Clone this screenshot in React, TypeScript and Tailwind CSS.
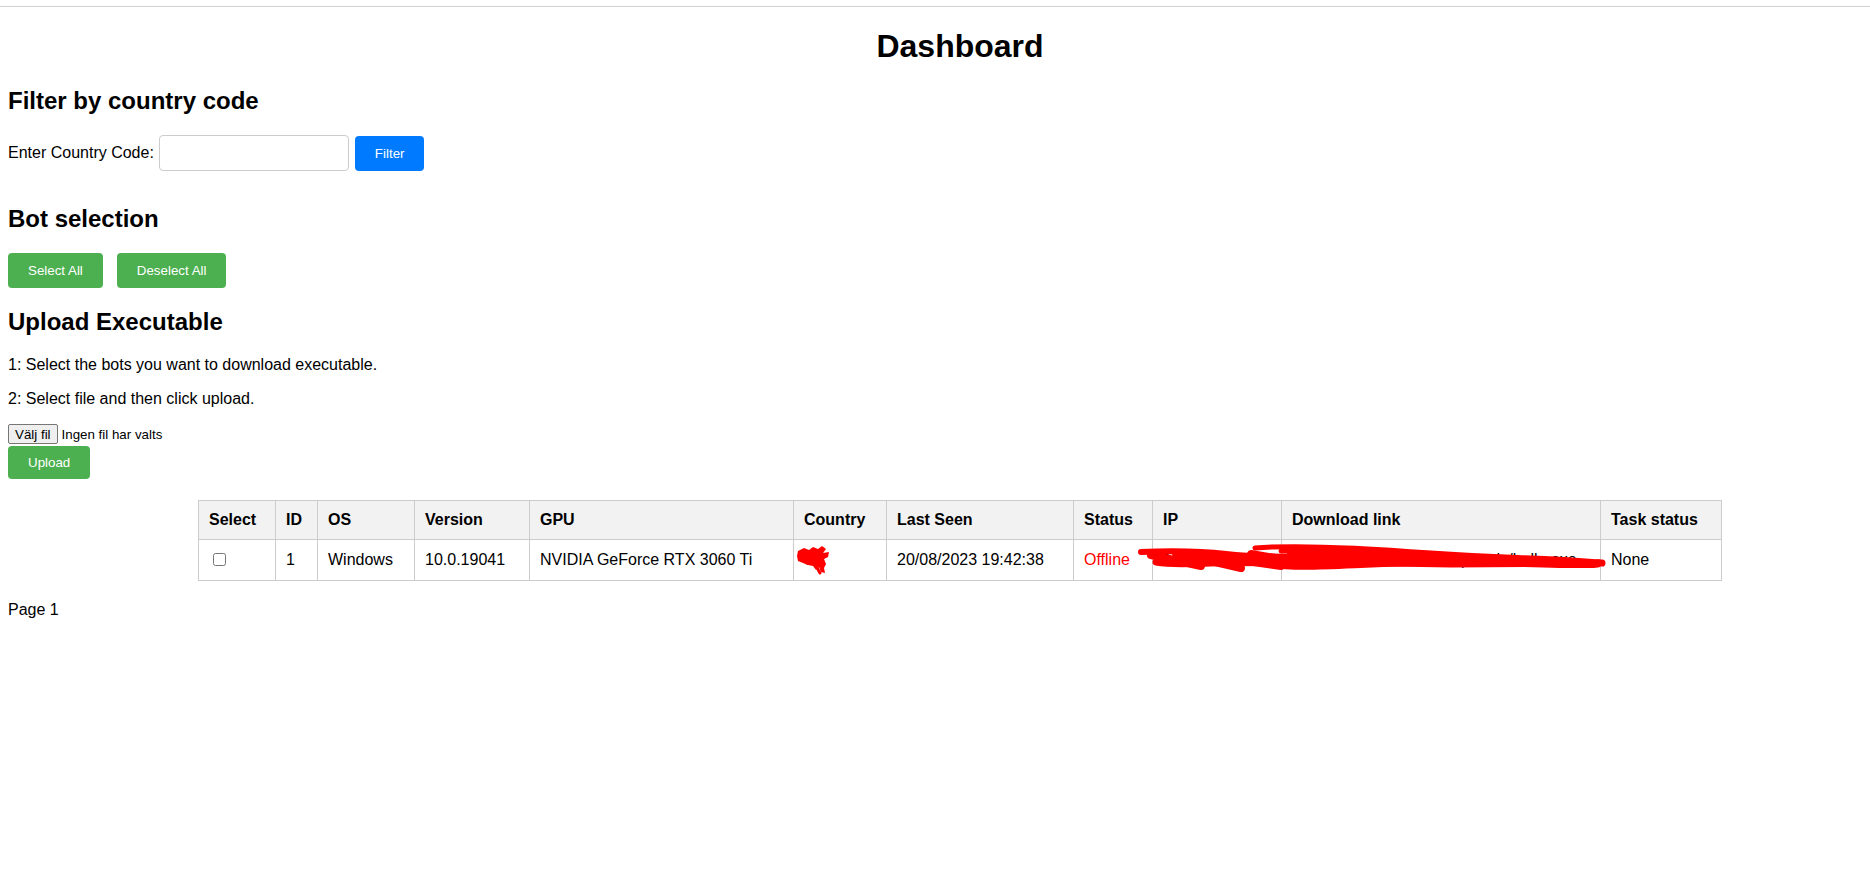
import { useState } from 'react';

const columns = [
  { name: 'Select', width: 'w-[77px]' },
  { name: 'ID', width: 'w-[42px]' },
  { name: 'OS', width: 'w-[97px]' },
  { name: 'Version', width: 'w-[115px]' },
  { name: 'GPU', width: 'w-[264px]' },
  { name: 'Country', width: 'w-[93px]' },
  { name: 'Last Seen', width: 'w-[187px]' },
  { name: 'Status', width: 'w-[79px]' },
  { name: 'IP', width: 'w-[129px]' },
  { name: 'Download link', width: 'w-[319px]' },
  { name: 'Task status', width: 'w-[121px]' },
];

// red marker scribbles that hide the country / ip / link
function CountryScribble() {
  return (
    <svg className="absolute left-[-3px] top-[4px]" width="45" height="32" viewBox="0 0 45 32">
      <path
        d="M7 7 L13 4 L18 6 L22 3 L27 5 L31 2 L35 5 L32 9 L38 8 L37 13 L33 15 L35 20 L33 24 L34 29 L30 28 L28 23 L25 26 L22 22 L17 21 L12 19 L7 17 L6 12 Z"
        fill="#ff0000"
      />
      <path d="M24 20 L29 29" stroke="#ff0000" strokeWidth="3" strokeLinecap="round" />
    </svg>
  );
}

function LinkScribble() {
  return (
    <svg className="absolute left-[-22px] top-[1px]" width="480" height="40" viewBox="0 0 480 40">
      <g fill="none" stroke="#ff0000" strokeLinecap="round" strokeLinejoin="round">
        <path d="M10 11 Q 60 9 95 13 T 200 15 T 330 18 T 471 22" strokeWidth="6" />
        <path d="M25 21 C 60 27, 100 16, 140 23 S 250 18, 380 22 S 450 21, 471 22" strokeWidth="7" />
        <path d="M124 7 C 160 4, 220 6, 300 12 S 400 15, 468 21" strokeWidth="5" />
        <path d="M20 14 L70 25 L45 12 L110 27 L80 15 L150 25 L120 13 L180 23 L160 12 L230 19" strokeWidth="8" />
        <path d="M60 23 L200 22 L320 24 L440 23" strokeWidth="5" />
        <path d="M150 10 C 200 9, 260 11, 300 16 S 360 18, 420 20" strokeWidth="5" />
        <path d="M70 18 L250 17 L350 19" strokeWidth="8" />
        <path d="M240 14 C 280 13, 330 15, 400 18" strokeWidth="4" />
      </g>
    </svg>
  );
}

export default function App() {
  const [code, setCode] = useState('');
  const [checked, setChecked] = useState(false);

  return (
    <div className="w-full overflow-hidden bg-white font-['Liberation_Sans',Arial,sans-serif] text-[16px] leading-[normal] text-black">
      <div className="w-[1920px]">
        <div className="h-[7px] border-b border-[#d0d0d0]" />

        <div className="px-2">
          <h1 className="my-[21.44px] text-center text-[32px] font-bold">Dashboard</h1>

          {/* Filter */}
          <h2 className="my-[19.92px] text-[24px] font-bold">Filter by country code</h2>
          <div className="mb-[34px] flex items-baseline">
            <label htmlFor="country">Enter Country Code:</label>
            <input
              id="country"
              type="text"
              value={code}
              onChange={(e) => setCode(e.target.value)}
              className="ml-[5px] h-[36px] w-[190px] rounded-[4px] border border-[#cccccc] px-2 text-[16px] outline-none"
            />
            <button className="ml-[6px] h-[35px] rounded-[4px] bg-[#007bff] px-5 text-[13.33px] text-white">
              Filter
            </button>
          </div>

          {/* Bot selection */}
          <h2 className="my-[19.92px] text-[24px] font-bold">Bot selection</h2>
          <div className="flex gap-[14px]">
            <button
              onClick={() => setChecked(true)}
              className="rounded-[4px] bg-[#4caf50] px-5 py-[10px] text-[13.33px] text-white"
            >
              Select All
            </button>
            <button
              onClick={() => setChecked(false)}
              className="rounded-[4px] bg-[#4caf50] px-5 py-[10px] text-[13.33px] text-white"
            >
              Deselect All
            </button>
          </div>

          {/* Upload */}
          <h2 className="my-[19.92px] text-[24px] font-bold">Upload Executable</h2>
          <p className="my-4">1: Select the bots you want to download executable.</p>
          <p className="my-4">2: Select file and then click upload.</p>
          <div className="flex h-[21px] items-center text-[13.33px]">
            <span className="mr-1 flex h-[20px] items-center rounded-[2px] border border-[#767676] bg-[#efefef] px-[6px]">
              Välj fil
            </span>
            <span>Ingen fil har valts</span>
          </div>
          <button className="mt-px rounded-[4px] bg-[#4caf50] px-5 py-[9px] text-[13.33px] text-white">
            Upload
          </button>

          {/* Bots table */}
          <table className="mx-auto mt-[21px] w-[1523px] table-fixed border-collapse">
            <colgroup>
              {columns.map((c) => (
                <col key={c.name} className={c.width} />
              ))}
            </colgroup>
            <thead>
              <tr className="bg-[#f2f2f2]">
                {columns.map((c) => (
                  <th key={c.name} className="border border-[#cccccc] p-[10px] text-left font-bold">
                    {c.name}
                  </th>
                ))}
              </tr>
            </thead>
            <tbody>
              <tr>
                <td className="border border-[#cccccc] p-[10px]">
                  <input
                    type="checkbox"
                    checked={checked}
                    onChange={(e) => setChecked(e.target.checked)}
                    className="mt-[3px] mr-[3px] mb-[3px] ml-1"
                  />
                </td>
                <td className="border border-[#cccccc] p-[10px]">1</td>
                <td className="border border-[#cccccc] p-[10px]">Windows</td>
                <td className="border border-[#cccccc] p-[10px]">10.0.19041</td>
                <td className="border border-[#cccccc] p-[10px]">NVIDIA GeForce RTX 3060 Ti</td>
                <td className="relative border border-[#cccccc] p-[10px]">
                  SE
                  <CountryScribble />
                </td>
                <td className="border border-[#cccccc] p-[10px]">20/08/2023 19:42:38</td>
                <td className="border border-[#cccccc] p-[10px] text-[#ff0000]">Offline</td>
                <td className="relative overflow-visible whitespace-nowrap border border-[#cccccc] p-[10px]">
                  192.168.20.9
                  <LinkScribble />
                </td>
                <td className="whitespace-nowrap border border-[#cccccc] p-[10px]">
                  http://192.168.20.1:67/uploads/hello.exe
                </td>
                <td className="border border-[#cccccc] p-[10px]">None</td>
              </tr>
            </tbody>
          </table>

          <p className="mt-5">Page 1</p>
        </div>
      </div>
    </div>
  );
}
